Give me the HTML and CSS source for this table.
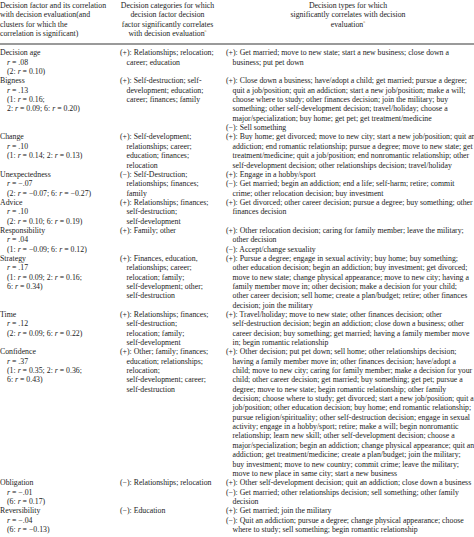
FILE: index.html
```html
<!DOCTYPE html>
<html lang="en">
<head>
<meta charset="utf-8">
<title>Decision factors</title>
<link rel="stylesheet" href="styles.css">
</head>
<body>
<table class="tbl">
  <colgroup><col class="c1"><col class="c2"><col class="c3"></colgroup>
  <thead>
    <tr>
      <th class="h1">Decision factor and its correlation<br>with decision evaluation(and<br>clusters for which the<br>correlation is significant)</th>
      <th class="h2">Decision categories for which<br>decision factor decision<br>factor significantly correlates<br>with decision evaluation<sup class="fn">a</sup></th>
      <th class="h3">Decision types for which<br>significantly correlates with decision<br>evaluation<sup class="fn">a</sup></th>
    </tr>
  </thead>
  <tbody>
    <tr class="first">
      <td><div>Decision age</div><div class="stat"><i>r</i> = .08</div><div class="stat">(2: <i>r</i> = 0.10)</div></td>
      <td><div class="entry">(+): Relationships; relocation;<br>career; education</div></td>
      <td><div class="entry">(+): Get married; move to new state; start a new business; close down a<br>business; put pet down</div></td>
    </tr>
    <tr>
      <td><div>Bigness</div><div class="stat"><i>r</i> = .13</div><div class="stat">(1: <i>r</i> = 0.16;</div><div class="stat">2: <i>r</i> = 0.09; 6: <i>r</i> = 0.20)</div></td>
      <td><div class="entry">(+): Self-destruction; self-<br>development; education;<br>career; finances; family</div></td>
      <td><div class="entry">(+): Close down a business; have/adopt a child; get married; pursue a degree;<br>quit a job/position; quit an addiction; start a new job/position; make a will;<br>choose where to study; other finances decision; join the military; buy<br>something; other self-development decision; travel/holiday; choose a<br>major/specialization; buy home; get pet; get treatment/medicine</div><div class="entry">(−): Sell something</div></td>
    </tr>
    <tr>
      <td><div>Change</div><div class="stat"><i>r</i> = .10</div><div class="stat">(1: <i>r</i> = 0.14; 2: <i>r</i> = 0.13)</div></td>
      <td><div class="entry">(+): Self-development;<br>relationships; career;<br>education; finances;<br>relocation</div></td>
      <td><div class="entry">(+): Buy home; get divorced; move to new city; start a new job/position; quit an<br>addiction; end romantic relationship; pursue a degree; move to new state; get<br>treatment/medicine; quit a job/position; end nonromantic relationship; other<br>self-development decision; other relationships decision; travel/holiday</div></td>
    </tr>
    <tr>
      <td><div>Unexpectedness</div><div class="stat"><i>r</i> = −.07</div><div class="stat">(2: <i>r</i> = −0.07; 6: <i>r</i> = −0.27)</div></td>
      <td><div class="entry">(−): Self-Destruction;<br>relationships; finances;<br>family</div></td>
      <td><div class="entry">(+): Engage in a hobby/sport</div><div class="entry">(−): Get married; begin an addiction; end a life; self-harm; retire; commit<br>crime; other relocation decision; buy investment</div></td>
    </tr>
    <tr>
      <td><div>Advice</div><div class="stat"><i>r</i> = .10</div><div class="stat">(2: <i>r</i> = 0.10; 6: <i>r</i> = 0.19)</div></td>
      <td><div class="entry">(+): Relationships; finances;<br>self-destruction;<br>self-development</div></td>
      <td><div class="entry">(+): Get divorced; other career decision; pursue a degree; buy something; other<br>finances decision</div></td>
    </tr>
    <tr>
      <td><div>Responsibility</div><div class="stat"><i>r</i> = .04</div><div class="stat">(1: <i>r</i> = −0.09; 6: <i>r</i> = 0.12)</div></td>
      <td><div class="entry">(+): Family; other</div></td>
      <td><div class="entry">(+): Other relocation decision; caring for family member; leave the military;<br>other decision</div><div class="entry">(−): Accept/change sexuality</div></td>
    </tr>
    <tr>
      <td><div>Strategy</div><div class="stat"><i>r</i> = .17</div><div class="stat">(1: <i>r</i> = 0.09; 2: <i>r</i> = 0.16;</div><div class="stat">6: <i>r</i> = 0.34)</div></td>
      <td><div class="entry">(+): Finances, education,<br>relationships; career;<br>relocation; family;<br>self-development; other;<br>self-destruction</div></td>
      <td><div class="entry">(+): Pursue a degree; engage in sexual activity; buy home; buy something;<br>other education decision; begin an addiction; buy investment; get divorced;<br>move to new state; change physical appearance; move to new city; having a<br>family member move in; other decision; make a decision for your child;<br>other career decision; sell home; create a plan/budget; retire; other finances<br>decision; join the military</div></td>
    </tr>
    <tr>
      <td><div>Time</div><div class="stat"><i>r</i> = .12</div><div class="stat">(2: <i>r</i> = 0.09; 6: <i>r</i> = 0.22)</div></td>
      <td><div class="entry">(+): Relationships; finances;<br>self-destruction;<br>relocation; family;<br>self-development</div></td>
      <td><div class="entry">(+): Travel/holiday; move to new state; other finances decision; other<br>self-destruction decision; begin an addiction; close down a business; other<br>career decision; buy something; get married; having a family member move<br>in; begin romantic relationship</div></td>
    </tr>
    <tr>
      <td><div>Confidence</div><div class="stat"><i>r</i> = .37</div><div class="stat">(1: <i>r</i> = 0.35; 2: <i>r</i> = 0.36;</div><div class="stat">6: <i>r</i> = 0.43)</div></td>
      <td><div class="entry">(+): Other; family; finances;<br>education; relationships;<br>relocation;<br>self-development; career;<br>self-destruction</div></td>
      <td><div class="entry">(+): Other decision; put pet down; sell home; other relationships decision;<br>having a family member move in; other finances decision; have/adopt a<br>child; move to new city; caring for family member; make a decision for your<br>child; other career decision; get married; buy something; get pet; pursue a<br>degree; move to new state; begin romantic relationship; other family<br>decision; choose where to study; get divorced; start a new job/position; quit a<br>job/position; other education decision; buy home; end romantic relationship;<br>pursue religion/spirituality; other self-destruction decision; engage in sexual<br>activity; engage in a hobby/sport; retire; make a will; begin nonromantic<br>relationship; learn new skill; other self-development decision; choose a<br>major/specialization; begin an addiction; change physical appearance; quit an<br>addiction; get treatment/medicine; create a plan/budget; join the military;<br>buy investment; move to new country; commit crime; leave the military;<br>move to new place in same city; start a new business</div></td>
    </tr>
    <tr>
      <td><div>Obligation</div><div class="stat"><i>r</i> = −.01</div><div class="stat">(6: <i>r</i> = 0.17)</div></td>
      <td><div class="entry">(−): Relationships; relocation</div></td>
      <td><div class="entry">(+): Other self-development decision; quit an addiction; close down a business</div><div class="entry">(−): Get married; other relationships decision; sell something; other family<br>decision</div></td>
    </tr>
    <tr>
      <td><div>Reversibility</div><div class="stat"><i>r</i> = −.04</div><div class="stat">(6: <i>r</i> = −0.13)</div></td>
      <td><div class="entry">(−): Education</div></td>
      <td><div class="entry">(+): Get married; join the military</div><div class="entry">(−): Quit an addiction; pursue a degree; change physical appearance; choose<br>where to study; sell something; begin romantic relationship</div></td>
    </tr>
  </tbody>
</table>
</body>
</html>
```

FILE: styles.css
```css
html, body {
  margin: 0;
  padding: 0;
  background: #ffffff;
}

body {
  color: #222222;
  font-family: "Liberation Serif", "Times New Roman", serif;
  font-size: 7.8px;
  line-height: 9.35px;
  overflow: hidden;
  width: 474px;
  height: 537px;
}

.tbl {
  border-collapse: collapse;
  table-layout: fixed;
  width: 474px;
  margin: 0;
}

.c1 { width: 120px; }
.c2 { width: 106px; }
.c3 { width: 248px; }

th {
  font-weight: normal;
  vertical-align: top;
  padding: 1px 0 5px 0;
  border-bottom: 2px solid #9a9a9a;
  text-align: left;
  white-space: nowrap;
}

th.h2 {
  text-align: center;
  padding-right: 11px;
}

th.h3 {
  text-align: center;
  padding-right: 4px;
}

td {
  vertical-align: top;
  padding: 0;
}

tr.first td {
  padding-top: 3px;
}

.stat {
  padding-left: 7px;
  white-space: nowrap;
}

.entry {
  padding-left: 6.5px;
  text-indent: -6.5px;
  white-space: nowrap;
}

.fn {
  font-size: 4.5px;
  line-height: 0;
  vertical-align: super;
  color: #c39467;
}
```
